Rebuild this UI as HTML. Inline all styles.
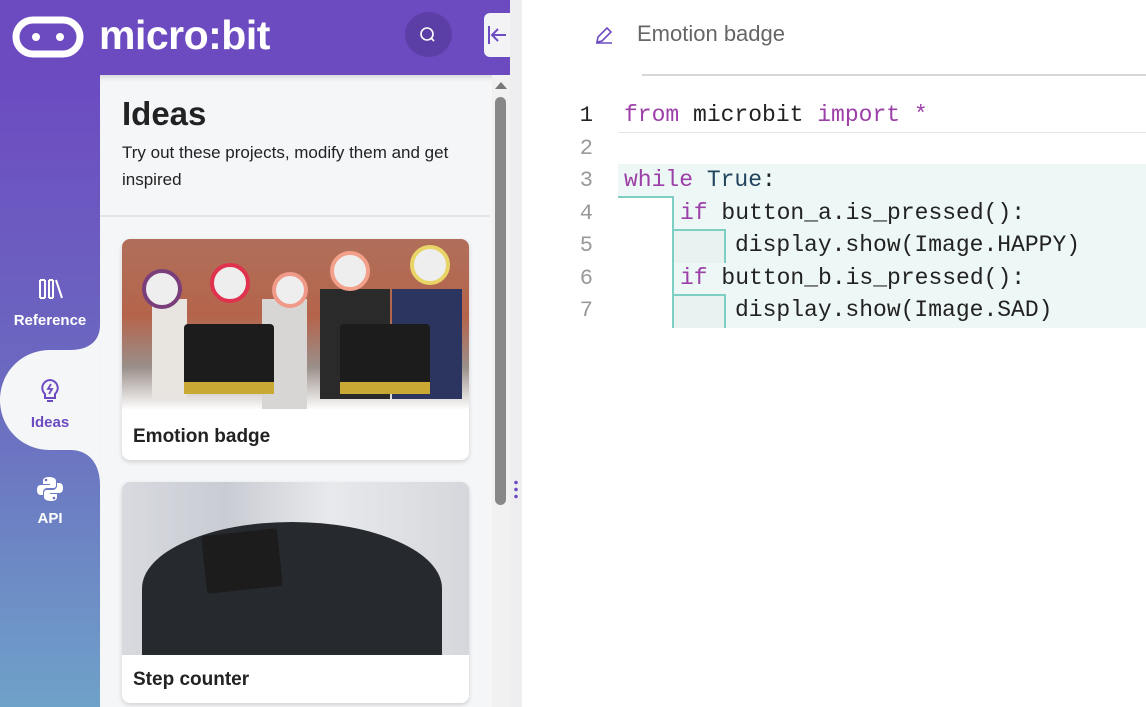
<!DOCTYPE html>
<html><head><meta charset="utf-8"><style>
*{margin:0;padding:0;box-sizing:border-box}
body{width:1146px;height:707px;overflow:hidden;font-family:"Liberation Sans",sans-serif;background:#fff;position:relative}
.hdr{position:absolute;left:0;top:0;width:510px;height:75px;background:#6c4bc1}
.side{position:absolute;left:0;top:75px;width:100px;height:632px;background:linear-gradient(#6c4bc1,#6b6ac0 50%,#6fa2c9)}
.panel{position:absolute;left:100px;top:75px;width:410px;height:632px;background:#f5f6f8;box-shadow:inset 0 6px 6px -4px rgba(0,0,0,.15)}
.nav{position:absolute;left:0;width:100px;text-align:center;color:#fff;font-weight:bold;font-size:15px}
.card{position:absolute;left:122px;width:347px;background:#fff;border-radius:8px;box-shadow:0 2px 5px rgba(0,0,0,.15);overflow:hidden}
.card .t{position:absolute;left:11px;font-size:19px;font-weight:bold;color:#222}
.code{position:absolute;left:0;font-family:"Liberation Mono",monospace;font-size:23px;white-space:pre;color:#222}
.ln{position:absolute;left:560px;width:33px;text-align:right;font-family:"Liberation Mono",monospace;font-size:22px;color:#999}
.k{color:#9c3fa8}.b{color:#23445e}
</style></head><body>
<div class="hdr">
 <svg style="position:absolute;left:12px;top:16px" width="72" height="42"><rect x="4" y="4" width="64" height="34" rx="17" fill="none" stroke="#fff" stroke-width="7"/><circle cx="24" cy="21" r="4" fill="#fff"/><circle cx="48" cy="21" r="4" fill="#fff"/></svg>
 <div style="position:absolute;left:99px;top:12px;color:#fff;font-size:41px;font-weight:bold;letter-spacing:-.5px">micro:bit</div>
 <div style="position:absolute;left:405px;top:12px;width:47px;height:45px;border-radius:50%;background:#5c3fa6"></div>
 <svg style="position:absolute;left:418px;top:25px" width="20" height="20"><circle cx="9" cy="9" r="6" fill="none" stroke="#fff" stroke-width="1.6"/><path d="M13 13l3 3" stroke="#fff" stroke-width="1.6"/></svg>
 <div style="position:absolute;left:484px;top:13px;width:26px;height:44px;background:#f3f3f6;border-radius:6px 0 0 6px"></div>
 <svg style="position:absolute;left:486px;top:24px" width="24" height="22"><path d="M3 2v18M20 11H7M12 5l-6 6 6 6" fill="none" stroke="#6c4bc1" stroke-width="2"/></svg>
</div>
<div class="side"></div>
<svg style="position:absolute;left:0;top:325px" width="100" height="160"><path d="M100 0C100 15 90 25 70 25H50C22 25 0 47 0 75C0 103 22 125 50 125H70C90 125 100 140 100 160Z" fill="#f5f6f8"/></svg>
<div class="nav" style="top:278px"><svg width="26" height="22"><path d="M3 2v18M8 2v18M3 2h5M3 20h5M12 2v18M16 2v18M12 2h4M12 20h4M19 2l6 18" fill="none" stroke="#fff" stroke-width="2"/></svg><div style="margin-top:8px">Reference</div></div>
<div class="nav" style="top:378px;color:#6c4bc1"><svg width="22" height="26"><path d="M11 2a8 8 0 0 0-5 14v4h10v-4a8 8 0 0 0-5-14zM8 23h6" fill="none" stroke="#6c4bc1" stroke-width="2"/><path d="M12 6l-3 5h4l-3 5" fill="none" stroke="#6c4bc1" stroke-width="1.8"/></svg><div style="margin-top:6px">Ideas</div></div>
<div class="nav" style="top:476px"><svg width="26" height="26"><path d="M12 1c-5 0-6 2-6 4v3h7v1H4c-3 0-4 2-4 5s1 5 4 5h2v-3c0-2 2-4 4-4h6c2 0 3-1 3-3V5c0-2-2-4-7-4z" fill="#fff"/><path d="M14 25c5 0 6-2 6-4v-3h-7v-1h9c3 0 4-2 4-5s-1-5-4-5h-2v3c0 2-2 4-4 4H10c-2 0-3 1-3 3v4c0 2 2 4 7 4z" fill="#fff"/><circle cx="9" cy="4" r="1.3" fill="#6c6cc0"/><circle cx="17" cy="22" r="1.3" fill="#6c6cc0"/></svg><div style="margin-top:4px">API</div></div>
<div class="panel">
 <div style="position:absolute;left:22px;top:20px;font-size:33px;font-weight:bold;color:#222">Ideas</div>
 <div style="position:absolute;left:22px;top:64px;width:360px;font-size:17px;line-height:27px;color:#222">Try out these projects, modify them and get inspired</div>
 <div style="position:absolute;left:0;top:140px;width:390px;height:2px;background:#e4e4e6"></div>
 <div style="position:absolute;left:392px;top:0;width:18px;height:632px;background:#f1f1f1"></div>
 <svg style="position:absolute;left:394px;top:5px" width="14" height="10"><path d="M1 9L7 2l6 7z" fill="#777"/></svg>
 <div style="position:absolute;left:395px;top:22px;width:11px;height:408px;border-radius:6px;background:#888"></div>
</div>
<div style="position:absolute;left:510px;top:0;width:12px;height:707px;background:#eeeef0"></div>
<div style="position:absolute;left:514px;top:479px;width:4px;height:20px;background:radial-gradient(circle,#6c4bc1 1.6px,transparent 2px) 0 0/4px 7px"></div>
<div class="card" style="top:239px;height:221px">
 <div style="position:absolute;left:0;top:0;width:347px;height:171px;background:linear-gradient(#b06f5a,#b5644b 45%,#9a8f8a 75%,#fff)"></div>
 <div style="position:absolute;left:30px;top:60px;width:35px;height:100px;background:#e8e4e0"></div>
 <div style="position:absolute;left:140px;top:60px;width:45px;height:110px;background:#d8d6d4"></div>
 <div style="position:absolute;left:198px;top:50px;width:70px;height:110px;background:#2a2a2a"></div>
 <div style="position:absolute;left:270px;top:50px;width:70px;height:110px;background:#2c3560"></div>
 <div style="position:absolute;left:20px;top:30px;width:40px;height:40px;border-radius:50%;background:#eee;border:4px solid #7a3f7a"></div>
 <div style="position:absolute;left:88px;top:24px;width:40px;height:40px;border-radius:50%;background:#eee;border:4px solid #e0324e"></div>
 <div style="position:absolute;left:150px;top:33px;width:36px;height:36px;border-radius:50%;background:#eee;border:4px solid #f09a8a"></div>
 <div style="position:absolute;left:208px;top:12px;width:40px;height:40px;border-radius:50%;background:#eee;border:4px solid #f2a08a"></div>
 <div style="position:absolute;left:288px;top:6px;width:40px;height:40px;border-radius:50%;background:#eee;border:4px solid #e9d468"></div>
 <div style="position:absolute;left:62px;top:85px;width:90px;height:70px;background:#1c1c1c;border-radius:4px"></div>
 <div style="position:absolute;left:218px;top:85px;width:90px;height:70px;background:#1c1c1c;border-radius:4px"></div>
 <div style="position:absolute;left:62px;top:143px;width:90px;height:12px;background:#c9a833"></div>
 <div style="position:absolute;left:218px;top:143px;width:90px;height:12px;background:#c9a833"></div>
 <div class="t" style="top:187px">Emotion badge</div>
</div>
<div class="card" style="top:482px;height:221px">
 <div style="position:absolute;left:0;top:0;width:347px;height:173px;background:linear-gradient(90deg,#d8dae0,#c9ccd3 30%,#e8e9ec 60%,#d5d7dc)"></div>
 <div style="position:absolute;left:20px;top:40px;width:300px;height:133px;border-radius:60% 60% 0 0;background:#262a2f"></div>
 <div style="position:absolute;left:82px;top:50px;width:76px;height:58px;background:#1c1c1c;border-radius:3px;transform:rotate(-6deg)"></div>
 <div class="t" style="top:187px">Step counter</div>
</div>
<svg style="position:absolute;left:594px;top:25px" width="20" height="20"><path d="M3 17l1-5L13 3l4 4-9 9zM2 18h16" fill="none" stroke="#6c4bc1" stroke-width="1.6"/></svg>
<div style="position:absolute;left:637px;top:21px;font-size:22px;color:#666">Emotion badge</div>
<div style="position:absolute;left:642px;top:74px;width:504px;height:2px;background:#d6d6d6"></div>
<div style="position:absolute;left:618px;top:132px;width:528px;height:1px;background:#e4e4e4"></div>
<div style="position:absolute;left:618px;top:164px;width:528px;height:164px;background:#edf7f5"></div>
<div style="position:absolute;left:618px;top:196px;width:56px;height:132px;background:#fff"></div>
<div style="position:absolute;left:618px;top:196px;width:55px;height:2px;background:#7dcfc3"></div>
<div style="position:absolute;left:672px;top:196px;width:2px;height:132px;background:#7dcfc3"></div>
<div style="position:absolute;left:674px;top:229px;width:52px;height:34px;background:#e8f3f1"></div>
<div style="position:absolute;left:674px;top:294px;width:52px;height:34px;background:#e8f3f1"></div>
<div style="position:absolute;left:674px;top:229px;width:52px;height:2px;background:#7dcfc3"></div>
<div style="position:absolute;left:724px;top:229px;width:2px;height:34px;background:#7dcfc3"></div>
<div style="position:absolute;left:674px;top:294px;width:52px;height:2px;background:#7dcfc3"></div>
<div style="position:absolute;left:724px;top:294px;width:2px;height:34px;background:#7dcfc3"></div>
<div class="ln" style="top:103px;color:#222">1</div>
<div class="ln" style="top:136px">2</div>
<div class="ln" style="top:168px">3</div>
<div class="ln" style="top:201px">4</div>
<div class="ln" style="top:233px">5</div>
<div class="ln" style="top:266px">6</div>
<div class="ln" style="top:298px">7</div>
<div class="code" style="left:624px;top:102px"><span class="k">from</span> microbit <span class="k">import</span> <span class="k">*</span></div>
<div class="code" style="left:624px;top:167px"><span class="k">while</span> <span class="b">True</span>:</div>
<div class="code" style="left:680px;top:200px"><span class="k">if</span> button_a.is_pressed():</div>
<div class="code" style="left:735px;top:232px">display.show(Image.HAPPY)</div>
<div class="code" style="left:680px;top:265px"><span class="k">if</span> button_b.is_pressed():</div>
<div class="code" style="left:735px;top:297px">display.show(Image.SAD)</div>
</body></html>
